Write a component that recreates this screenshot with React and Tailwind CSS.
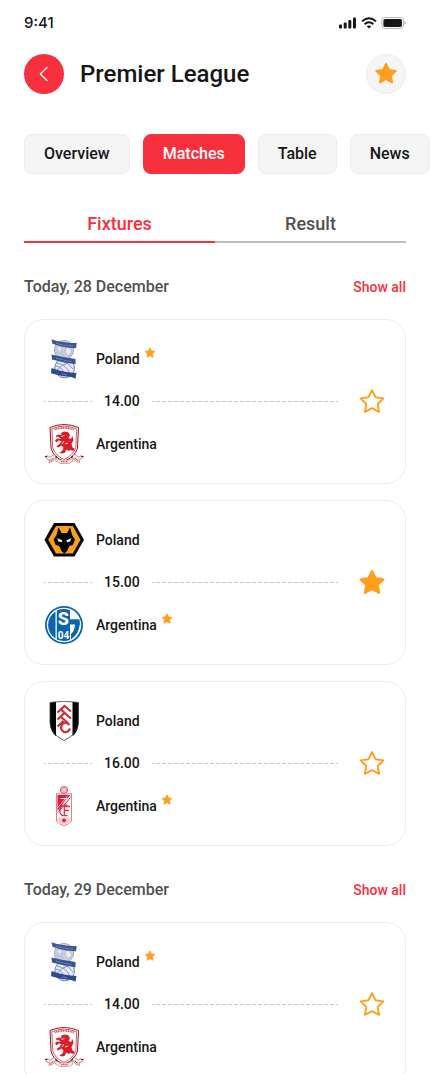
import { useState } from "react";

const TABS = ["Overview", "Matches", "Table", "News"];

const MATCHES = [
  { id: 1, time: "14.00", saved: false, home: { name: "Poland", crest: "birmingham", fav: true }, away: { name: "Argentina", crest: "boro" } },
  { id: 2, time: "15.00", saved: true, home: { name: "Poland", crest: "wolves" }, away: { name: "Argentina", crest: "schalke", fav: true } },
  { id: 3, time: "16.00", saved: false, home: { name: "Poland", crest: "fulham" }, away: { name: "Argentina", crest: "granada", fav: true } },
];

const DAYS = [
  { label: "Today, 28 December", matches: MATCHES },
  { label: "Today, 29 December", matches: MATCHES.slice(0, 1) },
];

function Star({ filled, className }) {
  return (
    <svg viewBox="0 0.6 28 28" className={className} aria-hidden="true">
      <path
        d="M14 2.7 17.5 9.8 25.4 11 19.7 16.6 21.1 24.4 14 20.7 6.9 24.4 8.3 16.6 2.6 11 10.5 9.8Z"
        fill={filled ? "#ff9f1c" : "none"}
        stroke="#ff9f1c"
        strokeWidth={filled ? 2.2 : 1.9}
        strokeLinejoin="round"
      />
    </svg>
  );
}

function Birmingham() {
  return (
    <g>
      <circle cx="20" cy="11" r="9.6" fill="#c9cfdb" stroke="#8d98b8" strokeWidth="0.8" />
      <path d="M13 8q3-2 5 1l-1 4 3 4M22 8l4 1 2 4-4 4-3-4ZM12 13l4 2" fill="#e6e9ef" stroke="#a3acc2" strokeWidth="0.7" />
      <circle cx="20.6" cy="29" r="9.8" fill="#e6eaf2" stroke="#5d6fa6" strokeWidth="0.9" />
      <path d="M12 27q7 1 9 10M13 24q10 2 13 11M18 22q7 2 11 8M12 32q6-7 14-9" fill="none" stroke="#7d8bb8" strokeWidth="0.9" />
      <path d="M7.5 0.3Q20 4.5 32.7 4L32 9.2Q19 9 8.5 4.8Z" fill="#3c5792" />
      <path d="M7.5 15.5Q20 18.5 31.5 20L31.5 25.2Q19 24 8 20.6Z" fill="#38538f" />
      <path d="M7.5 29Q20 33.5 32.5 34L31.5 39.8 27.5 38Q17 37.5 7 34.2Z" fill="#2d4a90" />
      <path d="M12 4Q20 7 29 6.8M12 19Q20 21.5 28 22.5M18 35l5 .6" fill="none" stroke="#8e9fc7" strokeWidth="1" strokeDasharray="1 0.6" />
    </g>
  );
}

function Boro() {
  return (
    <g>
      <path d="M6 3.5Q20-2.5 34.5 3.5L33.5 24Q31 33 20 37.5 9 33 7 24Z" fill="#fff" stroke="#8c1822" strokeWidth="1" />
      <path d="M7.8 4.8Q20-.5 32.7 4.8L31.8 23.5Q29.5 31 20 35.5 10.5 31 8.7 23.5Z" fill="none" stroke="#d9303a" strokeWidth="0.8" />
      <path d="M10.5 5.4Q20 2.3 30 5.4" fill="none" stroke="#d5565f" strokeWidth="1.8" strokeDasharray="1.2 0.5" />
      <path
        d="M17 9l3-1.5 4 .5 2 3-1.5 3 2.5 1 1.5-3 1 4-2 4 1 3.5 2 1-1 2.5-3-1-2 1-2-1.5-2 3.5-3 .5-2-1 3-2 1-3-2-2-3.5 2-1.5-1.5 3-2 2-3-3-.5-2 2-1.5-2 2-2 4 .5-3-2.5-2 1 .5-2.5 3-.5 2 1Z"
        fill="#d81e28"
      />
      <path d="M17.5 12.5l3-1M20 17l-2 3M24 19l-3 1" stroke="#fff" strokeWidth="0.8" />
      <path d="M1 32.5l3-.8 2 1.6 4-2.8 2.5 1.7L9 37l-4 1.5.6-2.7-2.6-.8ZM39.5 32.5l-3-.8-2 1.6-4-2.8-2.5 1.7 3.5 4.8 4 1.5-.6-2.7 2.6-.8Z" fill="#fbeeee" stroke="#a8666a" strokeWidth="0.7" />
      <path d="M12 34l4 2h8.5l4-2 .5 3-4 2.5h-9L11.5 37Z" fill="#f8e7e7" stroke="#b8797c" strokeWidth="0.6" />
      <path d="M17 37.7h7M6.5 36.5l3-2.5M31 34l3 2.5" stroke="#cb2a34" strokeWidth="1.1" strokeDasharray="1.2 0.5" />
      <path d="M1 32.5h2.3M37 32.5h2.3M11.5 32l1.5 1.5M28.8 32l-1.5 1.5" stroke="#6d1219" strokeWidth="1.2" />
    </g>
  );
}

function Wolves() {
  return (
    <g>
      <path d="M10 3h20.5L40 19.7 30.5 36.5H10L.5 19.7Z" fill="#050505" />
      <path d="M12 6h16.8L36.5 19.7 28.8 33.5H12L4.2 19.7Z" fill="#f9a11f" />
      <path d="M14.5 7.2l3 5.8h5.6l3-5.8 2.1 8 2.8 4.3-2 5.2-3.8 1.6-2 4.7-2.9 2.6-2.9-2.6-2-4.7-3.8-1.6-2-5.2 2.8-4.3Z" fill="#050505" />
      <path d="M13.2 18.2l5 2.1-.6 2-3-.7ZM27.4 18.2l-5 2.1.6 2 3-.7Z" fill="#fff" />
    </g>
  );
}

function Schalke() {
  return (
    <g>
      <circle cx="20" cy="20" r="19" fill="#0b64ad" />
      <circle cx="20" cy="20" r="17.2" fill="#fff" />
      <path d="M11.5 6.6V33.4A15.8 15.8 0 0 1 11.5 6.6Z" fill="#0b64ad" />
      <path d="M12.8 5.5Q20 2.8 26 5.3V34.7Q20 37.2 12.8 34.5Z" fill="#0b64ad" />
      <path d="M26 14.2h9.4q.8 3 .4 5.3H26Z" fill="#0b64ad" />
      <path d="M31 19h4.8Q35 29 27 34.4V29q4-3 4-10Z" fill="#0b64ad" />
      <text x="19.4" y="20.2" textAnchor="middle" fill="#fff" fontSize="18" fontWeight="800" fontFamily="Roboto, sans-serif">S</text>
      <text x="19.4" y="34" textAnchor="middle" fill="#fff" fontSize="10" fontWeight="700" fontFamily="Roboto, sans-serif">04</text>
    </g>
  );
}

function Fulham() {
  return (
    <g>
      <path d="M6 1.5Q20-1 34.5 1.5V22Q34 33 20 39.5 6.5 33 6 22Z" fill="#fff" />
      <path d="M6 1.5 12 .8V35.3Q6.5 31 6 22ZM34.5 1.5 28.5.8V35.3Q34 31 34.5 22Z" fill="#050505" />
      <path d="M6 1.5Q20-1 34.5 1.5V22Q34 33 20 39.5 6.5 33 6 22Z" fill="none" stroke="#3c3c3c" strokeWidth="0.8" />
      <path d="M13.5 11.5l7-6.5 6.5 5.5M17 8.5l7 6.5M13.5 18.5l7-6.5 6.5 5.5M17 16l7 6" fill="none" stroke="#cf2d37" strokeWidth="2.2" />
      <path d="M13.5 25.5l6-5.5M25.5 24Q21.5 19.5 18 23.5 15.5 28.5 20 31 24.5 31.5 26 27.5" fill="none" stroke="#cf2d37" strokeWidth="2.2" />
    </g>
  );
}

function Granada() {
  return (
    <g>
      <circle cx="20" cy="4" r="3.6" fill="#f3a9b4" stroke="#df3651" strokeWidth="0.8" />
      <path d="M18 2.5l4 3M22 2l-4 4" stroke="#fff" strokeWidth="0.7" />
      <path d="M12.5 7.5l4.5.5h6l4.5-.5V35Q26 38 20 39.8 14 38 12.5 35Z" fill="#fff" stroke="#e57c8c" strokeWidth="1" />
      <path d="M13.5 9h13L13.5 25Z" fill="#e4183c" />
      <path d="M13.5 22L24 9.5" stroke="#fff" strokeWidth="0.7" />
      <path d="M16.5 12.5h6.5L18.5 19" fill="none" stroke="#fff" strokeWidth="1" />
      <path d="M14 26.5L26.5 11.5" stroke="#e4183c" strokeWidth="1" />
      <path d="M23.5 19.5Q16 18 15.7 25q.5 6 7.8 4.3M20.3 17.5v12M20.5 20.5h5.5M20.5 24.5h4.5" fill="none" stroke="#d3344c" strokeWidth="1.3" />
      <path d="M13.5 31.5h13V34.5Q25 37 20 38.8 15 37 13.5 34.5Z" fill="#f7c8cf" />
      <circle cx="20" cy="34.3" r="1.9" fill="#d8213f" />
    </g>
  );
}

const CRESTS = {
  birmingham: Birmingham,
  boro: Boro,
  wolves: Wolves,
  schalke: Schalke,
  fulham: Fulham,
  granada: Granada,
};

function Team({ team }) {
  const Crest = CRESTS[team.crest];
  return (
    <div className="flex items-center gap-3">
      <svg viewBox="0 0 40 40" className="h-10 w-10 shrink-0" aria-hidden="true">
        <Crest />
      </svg>
      <div className="flex items-start gap-1">
        <span className="text-sm leading-6 font-medium text-[#161616]">{team.name}</span>
        {team.fav && <Star filled className="h-3 w-3" />}
      </div>
    </div>
  );
}

function DashedLine({ className }) {
  return (
    <span
      className={`h-px bg-[repeating-linear-gradient(90deg,#c9c9c9_0_2px,transparent_2px_4px,#c9c9c9_4px_6px)] ${className}`}
    />
  );
}

function MatchCard({ match }) {
  const [saved, setSaved] = useState(match.saved);

  return (
    <li className="flex items-center gap-5 rounded-[20px] border border-[#ececec] p-[19px]">
      <div className="flex flex-1 flex-col gap-3">
        <Team team={match.home} />
        <div className="flex items-center gap-3">
          <DashedLine className="w-12" />
          <span className="text-sm leading-[21px] font-medium text-[#161616]">{match.time}</span>
          <DashedLine className="flex-1" />
        </div>
        <Team team={match.away} />
      </div>
      <button type="button" aria-label="Save match" aria-pressed={saved} onClick={() => setSaved(!saved)}>
        <Star filled={saved} className="h-7 w-7" />
      </button>
    </li>
  );
}

function StatusBar() {
  return (
    <div className="flex items-center justify-between px-6 pt-3">
      <span className="font-[Inter,sans-serif] text-[15px] leading-[22px] font-medium text-[#161616]">9:41</span>
      <div className="flex items-center gap-1">
        {/* Signal */}
        <svg viewBox="0 0 18 12" className="h-3 w-[18px]" fill="#161616" aria-hidden="true">
          <rect x="0" y="7.5" width="3" height="4" rx="1" />
          <rect x="4.7" y="5.5" width="3" height="6" rx="1" />
          <rect x="9.3" y="3" width="3" height="8.5" rx="1" />
          <rect x="14" y="0.5" width="3" height="11" rx="1" />
        </svg>
        {/* Wifi */}
        <svg viewBox="0 0 16 12" className="h-3 w-4" fill="none" stroke="#161616" strokeWidth="1.9" aria-hidden="true">
          <path d="M1 4.4Q8-1.8 15 4.4M3.6 7.2q4.4-3.7 8.8 0" />
          <path d="M8 11.5 5.7 9.3Q8 7.5 10.3 9.3Z" fill="#161616" stroke="none" />
        </svg>
        {/* Battery */}
        <svg viewBox="0 0 25 12" className="h-3 w-[25px]" aria-hidden="true">
          <rect x="0.9" y="0.5" width="21.5" height="11" rx="3" fill="none" stroke="#b5b5b5" />
          <rect x="2.4" y="2" width="18.5" height="8" rx="1.7" fill="#161616" />
          <path d="M23.4 4v4q1.3-.6 1.3-2t-1.3-2Z" fill="#b5b5b5" />
        </svg>
      </div>
    </div>
  );
}

export default function App() {
  const [tab, setTab] = useState("Matches");
  const [view, setView] = useState("Fixtures");

  return (
    <div className="h-screen overflow-x-hidden overflow-y-auto bg-white font-[Roboto,sans-serif] [scrollbar-width:none]">
      <StatusBar />

      {/* Header */}
      <header className="flex items-center gap-4 px-6 pt-5">
        <button type="button" aria-label="Back" className="flex h-10 w-10 items-center justify-center rounded-full bg-[#f7303e]">
          <svg viewBox="0 0 24 24" className="h-6 w-6" fill="none" stroke="#fff" strokeWidth="1.3" strokeLinecap="round" strokeLinejoin="round" aria-hidden="true">
            <path d="M15 5.5 8.3 12l6.7 6.5" />
          </svg>
        </button>
        <h1 className="flex-1 text-2xl font-medium text-[#161616]">Premier League</h1>
        <button type="button" aria-label="Favourite league" className="flex h-10 w-10 items-center justify-center rounded-full border border-[#ececec] bg-[#f5f5f5]">
          <Star filled className="h-6 w-6" />
        </button>
      </header>

      <nav className="flex gap-[13px] overflow-x-auto pt-10 pl-6 [scrollbar-width:none]">
        {TABS.map((t) => (
          <button
            key={t}
            type="button"
            onClick={() => setTab(t)}
            className={`h-10 shrink-0 rounded-lg border px-[19px] text-base font-medium ${
              tab === t ? "border-[#f7303e] bg-[#f7303e] text-white" : "border-[#ececec] bg-[#f5f5f5] text-[#161616]"
            }`}
          >
            {t}
          </button>
        ))}
      </nav>

      <main className="px-6 pt-9 pb-6">
        <div className="flex">
          {["Fixtures", "Result"].map((v) => (
            <button
              key={v}
              type="button"
              onClick={() => setView(v)}
              className={`flex-1 border-b-2 pb-1 text-lg leading-[27px] font-medium ${
                view === v ? "border-[#f7303e] text-[#f7303e]" : "border-[#bfbfbf] text-[#505050]"
              }`}
            >
              {v}
            </button>
          ))}
        </div>

        {DAYS.map((day) => (
          <section key={day.label} className="pt-8">
            <div className="flex items-center justify-between">
              <h2 className="text-base font-medium text-[#505050]">{day.label}</h2>
              <a href="#all" className="text-sm font-medium text-[#f7303e]">Show all</a>
            </div>
            <ul className="flex flex-col gap-4 pt-5">
              {day.matches.map((m) => (
                <MatchCard key={m.id} match={m} />
              ))}
            </ul>
          </section>
        ))}
      </main>
    </div>
  );
}
